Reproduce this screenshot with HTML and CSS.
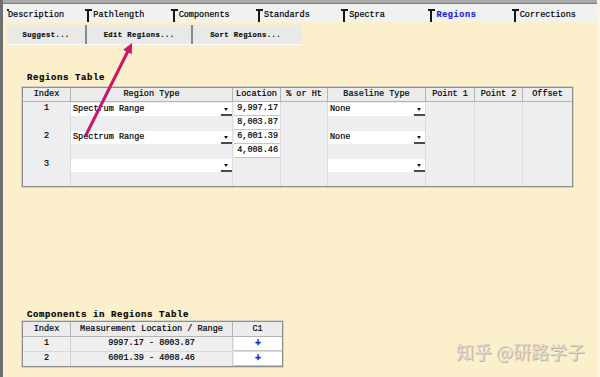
FILE: index.html
```html
<!DOCTYPE html>
<html lang="en">
<head>
    <meta charset="UTF-8">
    <meta name="viewport" content="width=device-width, initial-scale=1.0">
    <title>Regions</title>
    <link rel="stylesheet" href="styles.css">
</head>
<body>

<div class="app">
    <div class="frame-top"></div>

    <div class="tabs">
        <div class="tab tab-first"><span class="mark"></span>Description</div>
        <div class="tab"><span class="pin"></span>Pathlength</div>
        <div class="tab"><span class="pin"></span>Components</div>
        <div class="tab"><span class="pin"></span>Standards</div>
        <div class="tab"><span class="pin"></span>Spectra</div>
        <div class="tab active"><span class="pin"></span>Regions</div>
        <div class="tab"><span class="pin"></span>Corrections</div>
    </div>

    <div class="toolbar">
        <button class="btn btn-suggest">Suggest...</button>
        <button class="btn btn-edit">Edit Regions...</button>
        <button class="btn btn-sort">Sort Regions...</button>
    </div>

    <div class="content">
        <div class="section-title">Regions Table</div>
        <table class="grid regions">
            <colgroup>
                <col style="width:48px"><col style="width:162px"><col style="width:48px"><col style="width:47px">
                <col style="width:98px"><col style="width:49px"><col style="width:48px"><col style="width:49px">
            </colgroup>
            <thead>
                <tr>
                    <th>Index</th>
                    <th>Region Type</th>
                    <th>Location</th>
                    <th>% or Ht</th>
                    <th>Baseline Type</th>
                    <th>Point 1</th>
                    <th>Point 2</th>
                    <th>Offset</th>
                </tr>
            </thead>
            <tbody>
                <tr>
                    <td class="idx">1</td>
                    <td><div class="select"><span>Spectrum Range</span><i class="drop"></i></div></td>
                    <td><div class="num">9,997.17</div></td>
                    <td></td>
                    <td><div class="select"><span>None</span><i class="drop"></i></div></td>
                    <td></td><td></td><td></td>
                </tr>
                <tr>
                    <td></td>
                    <td></td>
                    <td><div class="num">8,003.87</div></td>
                    <td></td><td></td><td></td><td></td><td></td>
                </tr>
                <tr>
                    <td class="idx">2</td>
                    <td><div class="select"><span>Spectrum Range</span><i class="drop"></i></div></td>
                    <td><div class="num">6,001.39</div></td>
                    <td></td>
                    <td><div class="select"><span>None</span><i class="drop"></i></div></td>
                    <td></td><td></td><td></td>
                </tr>
                <tr>
                    <td></td>
                    <td></td>
                    <td><div class="num">4,008.46</div></td>
                    <td></td><td></td><td></td><td></td><td></td>
                </tr>
                <tr>
                    <td class="idx">3</td>
                    <td><div class="select"><span></span><i class="drop"></i></div></td>
                    <td></td>
                    <td></td>
                    <td><div class="select"><span></span><i class="drop"></i></div></td>
                    <td></td><td></td><td></td>
                </tr>
                <tr>
                    <td></td><td></td><td></td><td></td><td></td><td></td><td></td><td></td>
                </tr>
            </tbody>
        </table>

        <div class="section-title section-lower">Components in Regions Table</div>
        <table class="grid comps">
            <colgroup>
                <col style="width:48px"><col style="width:162px"><col style="width:49px">
            </colgroup>
            <thead>
                <tr>
                    <th>Index</th>
                    <th>Measurement Location / Range</th>
                    <th>C1</th>
                </tr>
            </thead>
            <tbody>
                <tr>
                    <td class="ctr">1</td>
                    <td class="ctr">9997.17 - 8003.87</td>
                    <td><div class="plus">+</div></td>
                </tr>
                <tr>
                    <td class="ctr">2</td>
                    <td class="ctr">6001.39 - 4008.46</td>
                    <td><div class="plus">+</div></td>
                </tr>
            </tbody>
        </table>
    </div>

    <div class="watermark">知乎 @研路学子</div>

    <svg class="arrow" width="600" height="377" viewBox="0 0 600 377">
        <line x1="86" y1="135" x2="127.5" y2="52" stroke="#c8166a" stroke-width="3" stroke-linecap="round"/>
        <polygon points="132,43 131.8,54.2 123.2,49.8" fill="#c8166a"/>
    </svg>
</div>

</body>
</html>
```

FILE: styles.css
```css
html, body {
    margin: 0;
    padding: 0;
}
body {
    width: 600px;
    height: 377px;
    overflow: hidden;
    background: #fcf0cc;
    font-family: "Liberation Mono", "DejaVu Sans Mono", monospace;
    font-size: 8.5px;
    color: #000;
    -webkit-text-stroke: 0.2px #000;
}
.app {
    position: relative;
    height: 377px;
    border-left: 3px solid #6e6e6e;
    border-right: 3px solid #fdf5e2;
    box-sizing: border-box;
}
.frame-top {
    height: 3px;
    background: #a9a9a9;
    border-bottom: 1px solid #7a7a7a;
}

/* tabs */
.tabs {
    display: flex;
    height: 18px;
    background: #f1f1ef;
}
.tab {
    width: 86px;
    display: flex;
    align-items: flex-end;
    line-height: 13px;
    white-space: nowrap;
    box-sizing: border-box;
}
.tab-first {
    width: 83px;
    padding-left: 5px;
    position: relative;
}
.mark {
    position: absolute;
    left: 4px;
    top: 5px;
    width: 2px;
    height: 2px;
    background: #222;
}
.pin {
    position: relative;
    width: 7px;
    height: 13px;
    margin-right: 1px;
    flex: none;
}
.pin::before {
    content: "";
    position: absolute;
    left: 0;
    top: 0;
    width: 7px;
    height: 2px;
    background: #151515;
}
.pin::after {
    content: "";
    position: absolute;
    left: 2px;
    top: 0;
    width: 2px;
    height: 13px;
    background: #151515;
}
.tab.active {
    color: #2222d6;
    -webkit-text-stroke: 0.2px #2222d6;
    font-weight: bold;
    letter-spacing: 0.6px;
    padding-left: 2px;
}

/* toolbar */
.toolbar {
    display: flex;
    margin: 3px 0 0 4px;
    width: 295px;
    height: 19px;
    background: #e9e9e7;
    border-bottom: 1px solid #fafafa;
}
.btn {
    font-family: inherit;
    font-size: 7.2px;
    font-weight: bold;
    letter-spacing: 0.4px;
    color: #111;
    background: transparent;
    border: none;
    padding: 0;
    margin: 0;
    height: 19px;
}
.btn-suggest {
    width: 80px;
    border-right: 2px solid #8a8a8a;
}
.btn-edit {
    width: 106px;
    border-right: 2px solid #8a8a8a;
}
.btn-sort {
    width: 105px;
}

/* content */
.content {
    padding-left: 19px;
}
.section-title {
    margin: 27px 0 3px 5px;
    font-size: 9px;
    font-weight: bold;
    letter-spacing: 0.6px;
    line-height: 12px;
}
.section-lower {
    margin-top: 122px;
    margin-bottom: 0;
}
.grid {
    border-collapse: separate;
    border-spacing: 0;
    table-layout: fixed;
    border: 1px solid #8e8e8e;
    box-shadow: 0 0 0 1px #d6d2c4;
    background: #eeeef1;
}
.regions {
    width: 550px;
}
.comps {
    width: 260px;
}
.grid th {
    font-weight: normal;
    height: 13px;
    padding: 0;
    line-height: 13px;
    background: #ececec;
    border-right: 1px solid #b4b4b4;
    border-bottom: 1px solid #b4b4b4;
    text-align: center;
    white-space: nowrap;
}
.comps th {
    height: 14px;
    line-height: 14px;
}
.grid th:last-child {
    border-right: none;
}
.grid td {
    height: 14px;
    padding: 0;
    border-right: 1px solid #dcdce0;
    vertical-align: top;
    line-height: 13px;
}
.grid td:last-child {
    border-right: none;
}
.idx, .ctr {
    text-align: center;
}
.comps td {
    background: #efefef;
    border-bottom: 1px solid #dadada;
    border-right: 1px solid #cfcfcf;
}
.comps tr:last-child td {
    border-bottom: none;
}

/* combo boxes */
.select {
    display: flex;
    height: 13px;
    margin-top: 1px;
    background: #fff;
}
.select span {
    flex: 1;
    padding-left: 2px;
    line-height: 12px;
    white-space: nowrap;
}
.drop {
    position: relative;
    width: 11px;
    height: 11px;
    border-bottom: 2px solid #4a4a4a;
}
.drop::after {
    content: "";
    position: absolute;
    left: 3px;
    top: 5px;
    border-left: 2.5px solid transparent;
    border-right: 2.5px solid transparent;
    border-top: 3px solid #111;
}
.num {
    height: 13px;
    margin-left: 1px;
    background: #fff;
    border-bottom: 1px solid #c6c6c6;
    text-align: right;
    padding-right: 2px;
    line-height: 13px;
}
.plus {
    height: 13px;
    margin-left: 1px;
    background: #fff;
    border-bottom: 1px solid #c6c6c6;
    text-align: center;
    color: #1a22c8;
    -webkit-text-stroke: 0.3px #1a22c8;
    font-weight: bold;
    font-size: 10px;
    line-height: 13px;
}

/* overlays */
.watermark {
    position: absolute;
    left: 453px;
    top: 340px;
    font-family: "Noto Sans CJK SC", sans-serif;
    font-size: 18px;
    line-height: 22px;
    color: #dcd8cf;
    -webkit-text-stroke: 0;
    text-shadow: 1px 1px 0 rgba(90, 85, 75, 0.4);
    white-space: nowrap;
}
.arrow {
    position: absolute;
    left: -3px;
    top: 0;
    pointer-events: none;
}
```
